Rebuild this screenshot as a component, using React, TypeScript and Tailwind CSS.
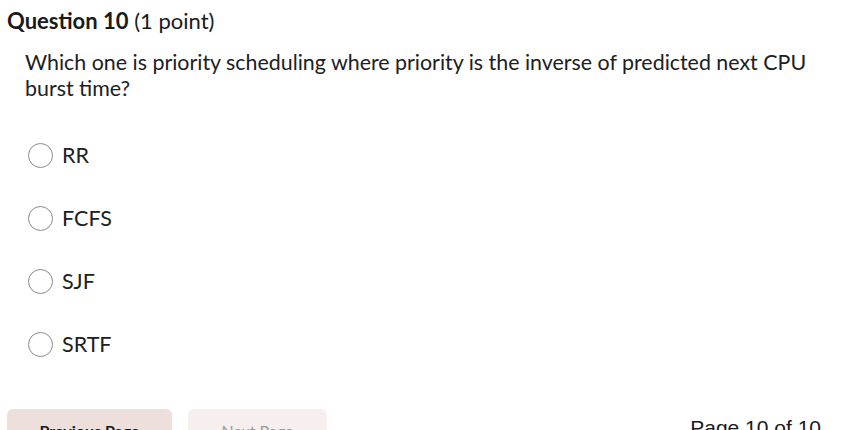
import React from "react";

const options = ["RR", "FCFS", "SJF", "SRTF"];

export default function App() {
  return (
    <div className="w-[848px] h-[430px] overflow-hidden bg-white text-[#1a1a1a]" style={{ fontFamily: "Lato, 'Noto Sans', sans-serif" }}>
      <div className="pl-[7px] pt-[8px]">
        <h2 className="text-[22px] leading-[26px]">
          <span className="font-bold">Question 10</span> <span>(1 point)</span>
        </h2>
      </div>
      <div className="pl-[25px] pt-[15px] pr-[12px]">
        <p className="text-[21.4px] leading-[26px] text-[#202020]">
          Which one is priority scheduling where priority is the inverse of predicted next CPU burst time?
        </p>
      </div>
      <div className="pl-[28px] pt-[41px] flex flex-col gap-[37px]">
        {options.map((o) => (
          <label key={o} className="flex items-center gap-[9px] h-[26px]">
            <span className="w-[25px] h-[25px] rounded-full border border-[#8a8a8a] bg-white" />
            <span className="text-[21.5px] text-[#202020]">{o}</span>
          </label>
        ))}
      </div>
      <div className="flex items-start pl-[7px] pt-[52px]">
        <button className="w-[165px] h-[40px] rounded-[6px] bg-[#ede0dc] text-[16px] leading-[20px] font-bold text-[#1a1a1a] pt-[12px] flex justify-center items-start">
          Previous Page
        </button>
        <button className="ml-[16px] w-[139px] h-[40px] rounded-[6px] bg-[#f6efed] text-[16px] leading-[20px] text-[#9a9a9a] pt-[12px] flex justify-center items-start">
          Next Page
        </button>
        <div className="ml-auto mr-[27px] pt-[6px] text-[21px] leading-[26px] text-[#1a1a1a]" style={{ fontFamily: "'Liberation Sans', Arial, sans-serif" }}>
          Page 10 of 10
        </div>
      </div>
    </div>
  );
}
